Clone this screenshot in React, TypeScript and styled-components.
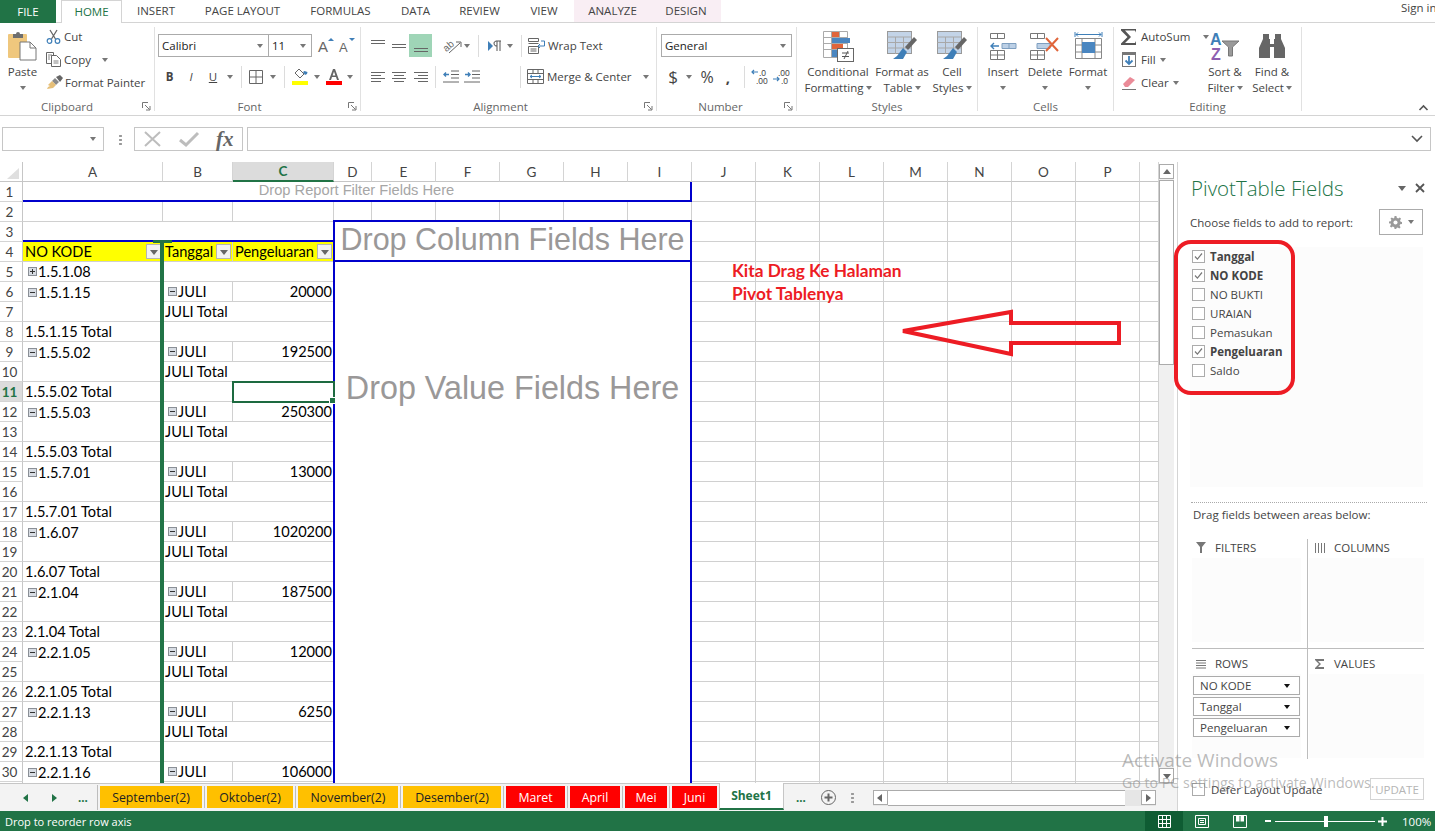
import React from "react";
import styled, { createGlobalStyle } from "styled-components";

const GREEN = "#217346";
const UI = '"Open Sans", "Liberation Sans", sans-serif';
const CELL = 'Lato, "Liberation Sans", sans-serif';
const BLUE = "#0000cc";
const RED = "#ed1c24";

const Global = createGlobalStyle`
  html, body { margin: 0; padding: 0; background: #fff; overflow: hidden; }
  * { box-sizing: border-box; }
  svg { display: block; flex: none; overflow: visible; }
`;

const Page = styled.div`
  position: relative;
  width: 1435px;
  height: 831px;
  overflow: hidden;
  display: flex;
  flex-direction: column;
  font-family: ${UI};
  font-size: 11.5px;
  color: #444;
`;

/* top tabs */
const TabRow = styled.div`
  height: 23px;
  display: flex;
  border-bottom: 1px solid #d4d4d4;
  flex: none;
`;
const FileTab = styled.div`
  width: 56px;
  height: 23px;
  margin-right: 5px;
  padding-bottom: 1px;
  background: ${GREEN};
  color: #fff;
  display: flex;
  align-items: center;
  justify-content: center;
`;
const RibbonTab = styled.div<{ $w: number; $active?: boolean; $tool?: boolean }>`
  width: ${(p) => p.$w}px;
  height: ${(p) => (p.$active ? 23 : 22)}px;
  padding-bottom: 1px;
  display: flex;
  align-items: center;
  justify-content: center;
  white-space: nowrap;
  background: ${(p) => (p.$tool ? "#f9eef4" : "#fff")};
  color: ${(p) => (p.$active ? GREEN : "#444")};
  ${(p) => p.$active && "border: 1px solid #d4d4d4; border-bottom: none; position: relative; z-index: 1;"}
`;
const SignIn = styled.div`
  margin-left: auto;
  width: 34px;
  height: 16px;
  white-space: nowrap;
`;

/* ribbon */
const Ribbon = styled.div`
  height: 93px;
  flex: none;
  display: flex;
  position: relative;
  border-bottom: 1px solid #d4d4d4;
`;
const Group = styled.div<{ $w: number; $pad: number }>`
  position: relative;
  width: ${(p) => p.$w}px;
  padding: 5px 0 0 ${(p) => p.$pad}px;
  display: flex;
  flex-direction: column;
  flex: none;
`;
const GroupBody = styled.div`
  height: 71px;
  display: flex;
`;
const GroupLabel = styled.div<{ $shift: number }>`
  position: absolute;
  left: 0;
  right: 0;
  top: 76px;
  height: 16px;
  line-height: 16px;
  text-align: center;
  color: #666;
  padding-right: ${(p) => p.$shift}px;
`;
const Launcher = styled.div`
  position: absolute;
  right: 3px;
  top: 79px;
`;
const GroupSep = styled.div`
  width: 1px;
  margin: 4px 0;
  background: #e1e1e1;
  flex: none;
`;
const Stack = styled.div<{ $w?: number; $ml?: number }>`
  display: flex;
  flex-direction: column;
  margin: -3px 0 0 ${(p) => p.$ml ?? 0}px;
  ${(p) => p.$w && `width: ${p.$w}px;`}
`;
const ToolRow = styled.div<{ $mt: number }>`
  display: flex;
  align-items: center;
  height: 23px;
  margin-top: ${(p) => p.$mt}px;
`;
const Slot = styled.div<{ $w: number; $on?: boolean; $bold?: boolean; $size?: number }>`
  width: ${(p) => p.$w}px;
  height: 23px;
  display: flex;
  align-items: center;
  justify-content: center;
  flex: none;
  background: ${(p) => (p.$on ? "#9fd5b7" : "transparent")};
  font-weight: ${(p) => (p.$bold ? 700 : 400)};
  ${(p) => p.$size && `font-size: ${p.$size}px;`}
`;
const Vsep = styled.div`
  width: 1px;
  height: 22px;
  background: #dcdcdc;
`;
const SmallBtn = styled.div<{ $gap?: number }>`
  display: flex;
  align-items: center;
  gap: ${(p) => p.$gap ?? 3}px;
  height: 23px;
  white-space: nowrap;
`;
const Combo = styled.div<{ $w: number }>`
  width: ${(p) => p.$w}px;
  height: 23px;
  border: 1px solid #ababab;
  margin-left: -1px;
  display: flex;
  align-items: center;
  justify-content: space-between;
  padding: 0 5px 0 3px;
  color: #222;
  background: #fff;
`;
const BigBtn = styled.div<{ $w: number }>`
  width: ${(p) => p.$w}px;
  display: flex;
  flex-direction: column;
  align-items: center;
  flex: none;
`;
const BigIcon = styled.div`
  height: 36px;
  display: flex;
  align-items: center;
  justify-content: center;
`;
const BigText = styled.div`
  line-height: 16px;
  height: 16px;
  display: flex;
  align-items: center;
  gap: 2px;
  white-space: nowrap;
`;
const Caret = styled.span<{ $dark?: boolean }>`
  display: inline-block;
  width: 0;
  height: 0;
  border-left: 3.5px solid transparent;
  border-right: 3.5px solid transparent;
  border-top: 4px solid ${(p) => (p.$dark ? "#111" : "#777")};
  flex: none;
`;
const Collapse = styled.div`
  position: absolute;
  right: 7px;
  top: 82px;
`;

/* formula bar */
const FormulaBar = styled.div`
  height: 46px;
  flex: none;
  padding: 11px 4px 11px 2px;
  display: flex;
  align-items: stretch;
`;
const FxBox = styled.div<{ $w?: number; $ml?: number; $pl?: number }>`
  ${(p) => (p.$w ? `width: ${p.$w}px;` : "flex: 1;")}
  margin-left: ${(p) => p.$ml ?? 0}px;
  border: 1px solid #c6c6c6;
  background: #fff;
  display: flex;
  align-items: center;
  justify-content: space-between;
  padding: 0 7px 0 ${(p) => p.$pl ?? 7}px;
`;
const GripDots = styled.div`
  width: 3px;
  height: 11px;
  margin: auto 0 auto 15px;
  background: radial-gradient(circle, #999 1.1px, transparent 1.3px) 0 0 / 3px 4px;
`;
const FxTools = styled.div`
  display: flex;
  align-items: center;
  gap: 17px;
`;
const FxMark = styled.span`
  font-family: "Liberation Serif", serif;
  font-style: italic;
  font-weight: 700;
  font-size: 21px;
  color: #666;
  line-height: 1;
`;

/* main area */
const Main = styled.div`
  flex: 1;
  display: flex;
  min-height: 0;
`;
const LeftCol = styled.div`
  width: 1177px;
  display: flex;
  flex-direction: column;
  flex: none;
`;
const SheetRow = styled.div`
  height: 621px;
  display: flex;
  flex: none;
`;
const SheetGrid = styled.div`
  position: relative;
  width: 1159px;
  height: 621px;
  overflow: hidden;
  display: grid;
  grid-template-columns: 23px 140px 70px 101px 38px repeat(12, 64px) 19px;
  grid-template-rows: 20px repeat(31, 20px);
  font-family: ${CELL};
  font-size: 14.6px;
  color: #000;
  flex: none;
`;
const Corner = styled.div`
  border-right: 1px solid #c6c6c6;
  border-bottom: 1px solid #c6c6c6;
  padding: 6px 0 0 7px;
`;
const ColHead = styled.div<{ $on?: boolean }>`
  border-right: 1px solid #d4d4d4;
  border-bottom: ${(p) => (p.$on ? `2px solid ${GREEN}` : "1px solid #c6c6c6")};
  background: ${(p) => (p.$on ? "#dcdcdc" : "#fff")};
  color: ${(p) => (p.$on ? GREEN : "#444")};
  font-weight: ${(p) => (p.$on ? 700 : 400)};
  font-size: 13.5px;
  display: flex;
  align-items: center;
  justify-content: center;
`;
const RowHead = styled.div<{ $on?: boolean }>`
  border-right: 1px solid #c6c6c6;
  border-bottom: 1px solid #d4d4d4;
  background: ${(p) => (p.$on ? "#dcdcdc" : "#fff")};
  color: ${(p) => (p.$on ? GREEN : "#444")};
  font-weight: ${(p) => (p.$on ? 700 : 400)};
  font-size: 13.5px;
  display: flex;
  align-items: center;
  justify-content: center;
  padding-right: 3px;
`;
const Cell = styled.div<{ $span?: number; $noBottom?: boolean; $right?: boolean }>`
  grid-column: span ${(p) => p.$span ?? 1};
  border-right: 1px solid #d0d0d0;
  border-bottom: ${(p) => (p.$noBottom ? "none" : "1px solid #d0d0d0")};
  display: flex;
  align-items: center;
  justify-content: ${(p) => (p.$right ? "flex-end" : "flex-start")};
  padding: 0 ${(p) => (p.$right ? 1 : 2)}px 0 2px;
  white-space: nowrap;
  overflow: hidden;
  min-width: 0;
`;
const MergedTop = styled.div`
  grid-column: span 3;
  border-bottom: 2px solid ${BLUE};
`;
const HeadCell = styled(Cell)`
  background: #ffff00;
  justify-content: space-between;
  padding-right: 1px;
`;
const FilterBtn = styled.span`
  width: 15px;
  height: 15px;
  background: #f2f2f2;
  border: 1px solid #b5b5b5;
  display: flex;
  align-items: center;
  justify-content: center;
  flex: none;
`;
const Toggle = styled.span<{ $open?: boolean }>`
  position: relative;
  width: 9px;
  height: 9px;
  margin: 0 1px 0 3px;
  background: #d7dce3;
  border: 1px solid #8a8f96;
  flex: none;
  &::before {
    content: "";
    position: absolute;
    left: 1px;
    right: 1px;
    top: 3px;
    height: 1px;
    background: #333;
  }
  ${(p) =>
    !p.$open &&
    `&::after { content: ""; position: absolute; top: 1px; bottom: 1px; left: 3px; width: 1px; background: #333; }`}
`;
const Selected = styled(Cell)`
  position: relative;
  overflow: visible;
  outline: 2px solid #1d6a40;
  outline-offset: -1px;
  z-index: 2;
  &::after {
    content: "";
    position: absolute;
    right: -3px;
    bottom: -3px;
    width: 5px;
    height: 5px;
    background: ${GREEN};
    border: 1px solid #fff;
  }
`;
const DropZone = styled.div`
  font-family: "Liberation Sans", Arial, sans-serif;
  color: #9a9898;
  white-space: nowrap;
  display: flex;
  justify-content: center;
`;
const FilterZone = styled(DropZone)`
  grid-column: span 9;
  font-size: 14.67px;
  color: #a6a6a6;
  align-items: center;
  line-height: 1;
  padding-bottom: 2px;
  border-right: 2px solid ${BLUE};
  border-bottom: 2px solid ${BLUE};
`;
const ColumnZone = styled(DropZone)`
  grid-column: span 6;
  grid-row: span 2;
  margin: -2px 0 0 -1px;
  border: 2px solid ${BLUE};
  font-size: 30.5px;
  align-items: center;
  padding-bottom: 4px;
  z-index: 1;
`;
const ValueZone = styled(DropZone)`
  grid-column: span 6;
  grid-row: span 27;
  margin-left: -1px;
  border-left: 2px solid ${BLUE};
  border-right: 2px solid ${BLUE};
  font-size: 32.3px;
  align-items: flex-start;
  padding-top: 108px;
  background: #fff;
  z-index: 1;
`;
const DragLine = styled.div`
  position: absolute;
  left: 160px;
  top: 78px;
  bottom: 0;
  width: 4px;
  background: ${GREEN};
  z-index: 3;
  &::before {
    content: "";
    position: absolute;
    left: -7px;
    top: 0;
    width: 19px;
    height: 3px;
    background: ${GREEN};
  }
`;

/* vertical scrollbar */
const VScroll = styled.div`
  width: 15px;
  margin-top: 2px;
  height: 619px;
  background: #f0f0f0;
  display: flex;
  flex-direction: column;
`;
const ScrollBtn = styled.div`
  width: 15px;
  height: 15px;
  background: #fff;
  border: 1px solid #ababab;
  display: flex;
  align-items: center;
  justify-content: center;
  flex: none;
`;
const VThumb = styled.div`
  height: 185px;
  background: #fff;
  border: 1px solid #ababab;
  flex: none;
  margin-top: 1px;
`;
const VTrack = styled.div`
  flex: 1;
`;

/* sheet tabs */
const TabBar = styled.div`
  height: 28px;
  flex: none;
  background: #f3f3f3;
  border-top: 1px solid #c6c6c6;
  display: flex;
  align-items: flex-start;
`;
const TabNav = styled.div`
  width: 98px;
  height: 25px;
  margin-top: 1px;
  display: flex;
  align-items: center;
  color: ${GREEN};
  border-right: 1px solid #bdbdbd;
  padding-left: 22px;
  gap: 20px;
  font-weight: 700;
  flex: none;
`;
const SheetTab = styled.div<{ $w: number; $bg: string; $light?: boolean }>`
  width: ${(p) => p.$w}px;
  height: 22px;
  margin: 2px 3px 0 2px;
  background: ${(p) => p.$bg};
  color: ${(p) => (p.$light ? "#fff" : "#222")};
  font-size: 12.3px;
  display: flex;
  align-items: center;
  justify-content: center;
  flex: none;
  white-space: nowrap;
  position: relative;
  &::after {
    content: "";
    position: absolute;
    right: -3px;
    top: 0;
    bottom: 0;
    width: 1px;
    background: #bdbdbd;
  }
`;
const ActiveTab = styled.div`
  width: 65px;
  height: 27px;
  margin-top: -1px;
  margin-left: -1px;
  background: #fff;
  border-bottom: 2px solid ${GREEN};
  border-left: 1px solid #c6c6c6;
  border-right: 1px solid #c6c6c6;
  color: ${GREEN};
  font-size: 12px;
  font-weight: 700;
  display: flex;
  align-items: center;
  justify-content: center;
  flex: none;
`;
const TabExtras = styled.div`
  display: flex;
  align-items: center;
  height: 25px;
  margin: 1px 0 0 12px;
  color: ${GREEN};
  font-weight: 700;
`;
const AddSheet = styled.div`
  width: 15px;
  height: 15px;
  margin-left: 15px;
  display: flex;
`;
const HScroll = styled.div`
  width: 283px;
  height: 16px;
  margin: 6px 0 0 19px;
  display: flex;
  background: #e6e6e6;
`;
const HThumb = styled.div`
  width: 237px;
  background: #fff;
  border-top: 1px solid #ababab;
  border-bottom: 1px solid #ababab;
`;
const HTrack = styled.div`
  flex: 1;
`;

/* field panel */
const Panel = styled.aside`
  position: relative;
  flex: 1;
  border-left: 1px solid #d4d4d4;
  padding: 12px 0 0 12px;
  display: flex;
  flex-direction: column;
  min-width: 0;
`;
const PanelTitle = styled.div`
  height: 28px;
  display: flex;
  align-items: center;
  justify-content: space-between;
  padding: 0 10px 0 1px;
  font-size: 20.5px;
  color: ${GREEN};
  font-weight: 300;
`;
const PanelTools = styled.div`
  display: flex;
  align-items: center;
  gap: 9px;
`;
const ChooseRow = styled.div`
  height: 26px;
  margin: 7px 12px 0 0;
  display: flex;
  align-items: center;
  justify-content: space-between;
`;
const GearBtn = styled.div`
  width: 44px;
  height: 26px;
  border: 1px solid #ababab;
  display: flex;
  align-items: center;
  justify-content: center;
  gap: 6px;
`;
const FieldList = styled.div`
  height: 240px;
  margin: 12px 12px 0 0;
  background: #fcfcfc;
`;
const FieldRow = styled.div<{ $on?: boolean }>`
  height: 19px;
  padding-left: 2px;
  display: flex;
  align-items: center;
  gap: 5px;
  font-weight: ${(p) => (p.$on ? 700 : 400)};
  color: #444;
`;
const CheckBox = styled.span`
  width: 13px;
  height: 13px;
  border: 1px solid #ababab;
  background: #fff;
  display: flex;
  align-items: center;
  justify-content: center;
  flex: none;
`;
const RedRing = styled.div`
  position: absolute;
  left: -4px;
  top: 78px;
  width: 121px;
  height: 155px;
  border: 4px solid ${RED};
  border-radius: 17px;
  pointer-events: none;
`;
const DotLine = styled.div`
  margin: 15px 8px 0 1px;
  border-top: 1px dotted #aaa;
`;
const DragText = styled.div`
  height: 16px;
  margin: 4px 0 0 3px;
  line-height: 16px;
`;
const Areas = styled.div`
  margin: 16px 0 0 2px;
  width: 232px;
  display: grid;
  grid-template-columns: 116px 116px;
  grid-template-rows: 110px 110px;
`;
const Area = styled.div<{ $left?: boolean; $top?: boolean }>`
  padding: ${(p) => (p.$top ? "0" : "6px")} 0 0 0;
  ${(p) => p.$left && "border-right: 1px solid #bdbdbd;"}
  ${(p) => p.$top && "border-bottom: 1px solid #bdbdbd;"}
`;
const AreaHead = styled.div<{ $left?: boolean }>`
  height: 17px;
  padding-left: ${(p) => (p.$left ? 4 : 7)}px;
  display: flex;
  align-items: center;
  gap: 9px;
  line-height: 1;
`;
const Well = styled.div<{ $h: number; $left?: boolean }>`
  height: ${(p) => p.$h}px;
  margin: 2px ${(p) => (p.$left ? 6 : 0)}px 0 ${(p) => (p.$left ? 0 : 1)}px;
  padding-top: 2px;
  background: #fcfcfc;
  display: flex;
  flex-direction: column;
  gap: 2px;
`;
const Pill = styled.div`
  width: 107px;
  height: 19px;
  margin-left: 1px;
  border: 1px solid #ababab;
  background: #fff;
  padding: 0 9px 0 6px;
  display: flex;
  align-items: center;
  justify-content: space-between;
`;
const PanelFoot = styled.div`
  margin: 19px 11px 0 2px;
  height: 22px;
  display: flex;
  align-items: center;
  gap: 6px;
`;
const UpdateBtn = styled.div`
  margin-left: auto;
  width: 54px;
  height: 22px;
  border: 1px solid #d4d4d4;
  color: #b5b5b5;
  display: flex;
  align-items: center;
  justify-content: center;
`;

/* status */
const StatusBar = styled.div`
  height: 20px;
  flex: none;
  background: ${GREEN};
  color: #fff;
  font-size: 11px;
  display: flex;
  align-items: center;
  padding-left: 5px;
`;
const StatusRight = styled.div`
  margin-left: auto;
  display: flex;
  align-items: center;
  height: 20px;
`;
const ViewBtn = styled.div<{ $on?: boolean }>`
  width: 38px;
  height: 20px;
  background: ${(p) => (p.$on ? "#0f5c33" : "transparent")};
  display: flex;
  align-items: center;
  justify-content: center;
`;
const ZoomMinus = styled.div`
  width: 6px;
  height: 2px;
  margin: 0 1px 0 6px;
  background: #fff;
`;
const ZoomLine = styled.div`
  position: relative;
  width: 100px;
  height: 1px;
  background: #fff;
  margin: 0 3px;
  &::after {
    content: "";
    position: absolute;
    left: 49px;
    top: -5px;
    width: 4px;
    height: 11px;
    background: #fff;
  }
`;
const ZoomValue = styled.div`
  width: 33px;
  margin-left: 15px;
  font-size: 11.5px;
  white-space: nowrap;
`;

/* overlays */
const Note = styled.div`
  position: absolute;
  left: 732px;
  top: 259px;
  font-family: ${CELL};
  font-weight: 700;
  font-size: 17.3px;
  line-height: 23px;
  color: ${RED};
  white-space: nowrap;
`;
const ArrowShape = styled.svg`
  position: absolute;
  left: 898px;
  top: 306px;
`;
const Watermark = styled.div`
  position: absolute;
  left: 1122px;
  top: 748px;
  color: rgba(130, 130, 130, 0.55);
  white-space: nowrap;
  pointer-events: none;
  z-index: 5;
`;
const WaterBig = styled.div`
  font-size: 19px;
  line-height: 24px;
`;
const WaterSmall = styled.div`
  font-size: 14.2px;
  line-height: 22px;
`;

/* drawings */
const Lines = ({ ys, xs }: { ys: number[]; xs: [number, number][] }) => (
  <svg width="16" height="16" viewBox="0 0 16 16" stroke="#666" strokeWidth="1">
    {ys.map((y, i) => (
      <line key={i} x1={xs[i][0]} x2={xs[i][1]} y1={y + 0.5} y2={y + 0.5} />
    ))}
  </svg>
);
const full: [number, number][] = [[1, 15], [1, 15]];
const Launch = () => (
  <svg width="9" height="9" viewBox="0 0 9 9" fill="none" stroke="#777">
    <path d="M.5 6V.5H6M3 3l4.5 4.5M8 4v4H4" />
  </svg>
);
const Check = () => (
  <svg width="11" height="11" viewBox="0 0 11 11" fill="none" stroke="#777" strokeWidth="1.2">
    <path d="M2 5.5l2.4 2.6L9 2.5" />
  </svg>
);
const PasteIcon = () => (
  <svg width="29" height="30" viewBox="0 0 29 30">
    <rect x="0" y="3" width="19" height="24" rx="1" fill="#efc77d" />
    <path d="M5 3h3a2 2 0 0 1 4 0h3v4H5z" fill="#6e6e6e" />
    <path d="M12 11h10l6 6v12H12z" fill="#fff" stroke="#777" />
    <path d="M22 11v6h6" fill="none" stroke="#777" />
  </svg>
);
const CutIcon = () => (
  <svg width="15" height="15" viewBox="0 0 15 15" fill="none">
    <path d="M4 1l5.5 9M11 1L5.5 10" stroke="#666" strokeWidth="1.3" />
    <circle cx="3.5" cy="12" r="2.3" stroke="#3f7fb8" strokeWidth="1.2" />
    <circle cx="11.5" cy="12" r="2.3" stroke="#3f7fb8" strokeWidth="1.2" />
  </svg>
);
const CopyIcon = () => (
  <svg width="15" height="15" viewBox="0 0 15 15" fill="#fff" stroke="#666">
    <path d="M.5.5h7v11h-7z" />
    <path d="M5.5 3.5h5l4 4v7h-9z" />
    <path d="M2 3h4M2 5h2M2 7h2M7.5 9h5M7.5 11h5" strokeWidth=".8" />
  </svg>
);
const BrushIcon = () => (
  <svg width="17" height="15" viewBox="0 0 17 15">
    <path d="M10 2l4-2 3 3-3 4z" fill="#666" />
    <path d="M9 3l4 4-3 3-4-4z" fill="#8a8a8a" />
    <path d="M6 6l4 4-3 3-6 1 1-2 2-1-2-1z" fill="#e6bf78" />
  </svg>
);
const FillIcon = () => (
  <svg width="17" height="17" viewBox="0 0 17 17">
    <path d="M7 1l5 5-4 4-5-5z" fill="#fff" stroke="#666" />
    <path d="M11 4l2 3 2-1 .5-2-3-1z" fill="#3f7fb8" />
    <rect x="0" y="13" width="16" height="4" fill="#ffff00" />
  </svg>
);
const ColorA = () => (
  <svg width="16" height="17" viewBox="0 0 16 17">
    <path d="M3 12L7 1h2l4 11h-2L10 9H6l-1 3zM6.6 7.5h2.8L8 3.5z" fill="#666" />
    <rect x="0" y="13" width="16" height="4" fill="#ff0000" />
  </svg>
);
const GrowA = ({ up }: { up: boolean }) => (
  <svg width="16" height="17" viewBox="0 0 16 17">
    <text x="0" y="15" fontFamily="Liberation Sans, sans-serif" fontSize={up ? 15 : 13} fill="#666">
      A
    </text>
    <path d={up ? "M10 4l3-3 3 3z" : "M10 1h6l-3 3z"} fill="#3f7fb8" />
  </svg>
);
const Orient = () => (
  <svg width="19" height="18" viewBox="0 0 19 18" fill="none">
    <text x="0" y="12" transform="rotate(-40 6 9)" fontFamily="Liberation Sans, sans-serif" fontSize="10" fill="#666">
      ab
    </text>
    <path d="M6 16L17 6M13 5h5v5" stroke="#666" />
  </svg>
);
const Para = () => (
  <svg width="13" height="12" viewBox="0 0 13 12">
    <path d="M0 1l5 5-5 5z" fill="#3f7fb8" />
    <path d="M8 1h5M9 1v10M12 1v10M8 1a2.5 2.5 0 0 0 1 5" stroke="#555" fill="none" />
  </svg>
);
const WrapIcon = () => (
  <svg width="17" height="16" viewBox="0 0 17 16" fill="none" stroke="#666">
    <path d="M.5.5h10v3H.5zM.5 5.5h10M.5 8.5h10v7H.5zM2.5 11h6M2.5 13h6" />
    <path d="M13 3h3.5v5H10" stroke="#3f7fb8" />
    <path d="M12 6l-2 2 2 2" stroke="#3f7fb8" />
  </svg>
);
const MergeIcon = () => (
  <svg width="17" height="15" viewBox="0 0 17 15" fill="none" stroke="#666">
    <path d="M.5.5h16v14H.5zM.5 4.5h16M.5 10.5h16M6 .5v4M11 .5v4M6 10.5v4M11 10.5v4" />
    <path d="M3 7.5h11M5 6L3 7.5 5 9M12 6l2 1.5L12 9" stroke="#3f7fb8" />
  </svg>
);
const Indent = ({ dir }: { dir: "in" | "out" }) => (
  <svg width="16" height="13" viewBox="0 0 16 13" fill="none">
    <path d="M8 1h8M8 4.5h8M8 8h8M0 12h16" stroke="#666" />
    <path d={dir === "out" ? "M6 4.5H1M3 2.5l-2 2 2 2" : "M1 4.5h5M4 2.5l2 2-2 2"} stroke="#3f7fb8" strokeWidth="1.4" />
  </svg>
);
const BordersIcon = () => (
  <svg width="14" height="14" viewBox="0 0 14 14" fill="none" stroke="#666">
    <path d="M.5.5h13v13H.5zM7 .5v13M.5 7h13" />
  </svg>
);
const DecIcon = ({ more }: { more: boolean }) => (
  <svg width="18" height="17" viewBox="0 0 18 17" fontFamily="Liberation Sans, sans-serif" fontSize="8.5" fill="#444">
    <text x={more ? 5 : 8} y="8">{more ? ".00" : ".0"}</text>
    <text x={more ? 8 : 5} y="16">{more ? ".0" : ".00"}</text>
    <path d={more ? "M0 11h6M4 9l2 2-2 2" : "M7 4H1M3 2L1 4l2 2"} stroke="#3f7fb8" strokeWidth="1.2" fill="none" />
  </svg>
);
const CondIcon = () => (
  <svg width="31" height="31" viewBox="0 0 31 31">
    <path d="M.5.5h24v26H.5zM.5 6.5h24M.5 12.5h24M.5 18.5h24M8.5.5v26M16.5.5v26" fill="#fff" stroke="#aaa" />
    <rect x="9" y="1" width="7" height="5" fill="#e0653a" />
    <rect x="9" y="7" width="18" height="5" fill="#4a86c0" />
    <rect x="9" y="13" width="11" height="5" fill="#e0653a" />
    <rect x="9" y="19" width="5" height="7" fill="#4a86c0" />
    <rect x="14.5" y="17.5" width="16" height="13" fill="#fff" stroke="#666" />
    <path d="M19 22h7M19 25.5h7M25 20l-4 8" stroke="#555" fill="none" />
  </svg>
);
const TableBrush = () => (
  <svg width="30" height="30" viewBox="0 0 30 30">
    <rect x=".5" y=".5" width="24" height="22" fill="#c3d4e8" stroke="#999" />
    <path d="M.5 6h24M.5 11.5h24M.5 17h24M8.5 6v17M16.5 6v17" stroke="#a8a8a8" fill="none" />
    <path d="M30 9l-9 10-3-3 9-10z" fill="#666" />
    <path d="M16 17l4 4-4 7H6l4-3z" fill="#3f7fb8" />
  </svg>
);
const InsertIcon = () => (
  <svg width="27" height="27" viewBox="0 0 27 27" fill="none" stroke="#777">
    <path d="M.5.5h14v5H.5zM7.5.5v5M.5 17.5h14v9H.5zM7.5 17.5v9M.5 22h14" />
    <path d="M12 10.5h14v5H12zM19 10.5v5" fill="#bcd0e6" stroke="#7f9fc0" />
    <path d="M9 13H1M4 10l-3 3 3 3" stroke="#3f7fb8" strokeWidth="1.4" />
  </svg>
);
const DeleteIcon = () => (
  <svg width="30" height="27" viewBox="0 0 30 27" fill="none" stroke="#777">
    <path d="M.5.5h14v5H.5zM7.5.5v5M.5 17.5h14v9H.5zM7.5 17.5v9M.5 22h14" />
    <path d="M7 10.5h13v5H7z" fill="#bcd0e6" stroke="#7f9fc0" />
    <path d="M16 5l12 13M28 5L16 18" stroke="#e0653a" strokeWidth="2" />
  </svg>
);
const FormatIcon = () => (
  <svg width="29" height="30" viewBox="0 0 29 30" fill="none" stroke="#888">
    <path d="M1 1v5M28 1v5M2 3.5h25M2 3.5l2-2M2 3.5l2 2M27 3.5l-2-2M27 3.5l-2 2" stroke="#3f7fb8" />
    <path d="M1.5 7.5h26v20h-26zM1.5 14h26M1.5 21h26M8 7.5v20M21 7.5v20" fill="#fff" />
    <rect x="8" y="11" width="13" height="11" fill="#4a86c0" stroke="none" />
  </svg>
);
const SumIcon = () => (
  <svg width="16" height="16" viewBox="0 0 16 16">
    <path d="M0 0h15v3.5l-1-2H4l6 6.5-6 6h10l1-2V16H0v-1.5L6.5 8 0 1.5z" fill="#555" />
  </svg>
);
const FillDown = () => (
  <svg width="14" height="15" viewBox="0 0 14 15">
    <rect x=".5" y=".5" width="13" height="14" fill="#fff" stroke="#777" />
    <rect x="0" y="0" width="14" height="3" fill="#777" />
    <path d="M7 4v8M3.5 8.5L7 12l3.5-3.5" stroke="#3f7fb8" strokeWidth="1.8" fill="none" />
  </svg>
);
const ClearIcon = () => (
  <svg width="15" height="14" viewBox="0 0 15 14">
    <path d="M1 8l7-7 5 3-7 7H3z" fill="#ea8b98" />
    <path d="M0 13.5h14" stroke="#777" />
  </svg>
);
const SortIcon = () => (
  <svg width="30" height="28" viewBox="0 0 30 28" fontFamily="Liberation Sans, sans-serif" fontWeight="700" fontSize="16">
    <text x="0" y="13" fill="#3f7fb8">A</text>
    <text x="1" y="28" fill="#8e5fb0">Z</text>
    <path d="M12 9h17l-6.5 6v9h-4v-9z" fill="#9a9a9a" stroke="#777" />
  </svg>
);
const FindIcon = () => (
  <svg width="26" height="24" viewBox="0 0 26 24" fill="#666">
    <path d="M4 0h6v5h1v5h4V5h1V0h6v5l4 9v10H15V13h-4v11H0V14l4-9z" />
  </svg>
);
const GearIcon = () => (
  <svg width="13" height="13" viewBox="0 0 14 14" fill="#9a9a9a">
    <path d="M6 0h2l.4 2 1.5.6L11.6 1.5 13 3l-1.1 1.7.6 1.5 1.5.3v2l-2 .4-.6 1.5 1.1 1.7-1.4 1.4-1.7-1.1-1.5.6L8 14H6l-.4-2-1.5-.6-1.7 1.1L1 11l1.1-1.7-.6-1.5L0 8V6l2-.4.6-1.5L1.5 3 3 1.5l1.7 1.1 1-.6z" />
    <circle cx="7" cy="7" r="2.2" fill="#fff" />
  </svg>
);
const Tri = ({ dir, color = "#666" }: { dir: "up" | "down" | "left" | "right"; color?: string }) => {
  const d = { up: "M0 6L4 1l4 5z", down: "M0 2h8L4 7z", left: "M6 0v8L1 4z", right: "M2 0v8l5-4z" }[dir];
  return (
    <svg width="8" height="8" viewBox="0 0 8 8">
      <path d={d} fill={color} />
    </svg>
  );
};
const SumSmall = () => (
  <svg width="10" height="10" viewBox="0 0 10 10">
    <path d="M0 0h9v2H3l3 3-3 3h6v2H0V9l4-4-4-4z" fill="#777" />
  </svg>
);

const WHITE = "#fff";
const GridView = () => (
  <svg width="13" height="13" viewBox="0 0 13 13" fill="none" stroke={WHITE}>
    <path d="M.5.5h12v12H.5zM4.5.5v12M8.5.5v12M.5 4.5h12M.5 8.5h12" />
  </svg>
);
const PageView = () => (
  <svg width="14" height="13" viewBox="0 0 14 13" fill="none" stroke={WHITE}>
    <path d="M.5.5h13v12H.5zM3.5 3.5h7v6h-7zM5 5.5h4M5 7.5h4" />
  </svg>
);
const BreakView = () => (
  <svg width="14" height="13" viewBox="0 0 14 13" stroke={WHITE} fill="none">
    <path d="M.5.5h13v12H.5z" />
    <path d="M3 .5h3.5v6H3zM7.5.5H11v6H7.5z" fill={WHITE} stroke="none" />
  </svg>
);

/* data */
const colNames = ["A", "B", "C", "D", "E", "F", "G", "H", "I", "J", "K", "L", "M", "N", "O", "P", ""];
const codes: [string, string][] = [
  ["1.5.1.15", "20000"],
  ["1.5.5.02", "192500"],
  ["1.5.5.03", "250300"],
  ["1.5.7.01", "13000"],
  ["1.6.07", "1020200"],
  ["2.1.04", "187500"],
  ["2.2.1.05", "12000"],
  ["2.2.1.13", "6250"],
  ["2.2.1.16", "106000"],
];
const fields = [
  { name: "Tanggal", on: true },
  { name: "NO KODE", on: true },
  { name: "NO BUKTI", on: false },
  { name: "URAIAN", on: false },
  { name: "Pemasukan", on: false },
  { name: "Pengeluaran", on: true },
  { name: "Saldo", on: false },
];
const orangeTabs = [
  { name: "September(2)", w: 102 },
  { name: "Oktober(2)", w: 86 },
  { name: "November(2)", w: 100 },
  { name: "Desember(2)", w: 98 },
];
const redTabs = [
  { name: "Maret", w: 59 },
  { name: "April", w: 50 },
  { name: "Mei", w: 42 },
  { name: "Juni", w: 45 },
];

const Blank = ({ n }: { n: number }) => (
  <>
    {Array.from({ length: n }, (_, i) => (
      <Cell key={i} />
    ))}
  </>
);

function pivotCells(row: number) {
  if (row === 5) {
    return (
      <>
        <Cell>
          <Toggle />
          1.5.1.08
        </Cell>
        <Cell $span={2} />
      </>
    );
  }
  if (row > 30) return <Cell $span={3} />;
  const idx = Math.floor((row - 6) / 3);
  const kind = (row - 6) % 3;
  const [code, value] = codes[idx];
  if (kind === 0) {
    return (
      <>
        <Cell $noBottom>
          <Toggle $open />
          {code}
        </Cell>
        <Cell>
          <Toggle $open />
          JULI
        </Cell>
        <Cell $right>{value}</Cell>
      </>
    );
  }
  if (kind === 1) {
    return (
      <>
        <Cell />
        <Cell $span={2}>JULI Total</Cell>
      </>
    );
  }
  return (
    <>
      <Cell>{code} Total</Cell>
      {row === 11 ? (
        <>
          <Cell />
          <Selected />
        </>
      ) : (
        <Cell $span={2} />
      )}
    </>
  );
}

function Sheet() {
  const rows = Array.from({ length: 31 }, (_, i) => i + 1);
  return (
    <SheetGrid>
      <Corner>
        <svg width="12" height="11" viewBox="0 0 12 11">
          <path d="M12 0v11H0z" fill="#dfdfdf" />
        </svg>
      </Corner>
      {colNames.map((c, i) => (
        <ColHead key={i} $on={c === "C"}>
          {c}
        </ColHead>
      ))}
      {rows.map((r) => (
        <React.Fragment key={r}>
          <RowHead $on={r === 11}>{r <= 30 ? r : ""}</RowHead>
          {r === 1 && <FilterZone>Drop Report Filter Fields Here</FilterZone>}
          {r === 2 && <Blank n={9} />}
          {r === 3 && (
            <>
              <MergedTop />
              <ColumnZone>Drop Column Fields Here</ColumnZone>
            </>
          )}
          {r === 4 && (
            <>
              <HeadCell>
                NO KODE
                <FilterBtn>
                  <Tri dir="down" />
                </FilterBtn>
              </HeadCell>
              <HeadCell>
                Tanggal
                <FilterBtn>
                  <Tri dir="down" />
                </FilterBtn>
              </HeadCell>
              <HeadCell>
                Pengeluaran
                <FilterBtn>
                  <Tri dir="down" />
                </FilterBtn>
              </HeadCell>
            </>
          )}
          {r >= 5 && pivotCells(r)}
          {r === 5 && <ValueZone>Drop Value Fields Here</ValueZone>}
          <Blank n={8} />
        </React.Fragment>
      ))}
      <DragLine />
    </SheetGrid>
  );
}

function RibbonBar() {
  return (
    <Ribbon>
      <Group $w={154} $pad={0}>
        <GroupBody>
          <BigBtn $w={45}>
            <BigIcon>
              <PasteIcon />
            </BigIcon>
            <BigText>Paste</BigText>
            <BigText>
              <Caret />
            </BigText>
          </BigBtn>
          <Stack $ml={1}>
            <SmallBtn>
              <CutIcon />
              Cut
            </SmallBtn>
            <SmallBtn>
              <CopyIcon />
              Copy
              <Slot $w={22}>
                <Caret />
              </Slot>
            </SmallBtn>
            <SmallBtn $gap={2}>
              <BrushIcon />
              Format Painter
            </SmallBtn>
          </Stack>
        </GroupBody>
        <GroupLabel $shift={20}>Clipboard</GroupLabel>
        <Launcher>
          <Launch />
        </Launcher>
      </Group>
      <GroupSep />
      <Group $w={205} $pad={4}>
        <ToolRow $mt={6}>
          <Combo $w={111}>
            Calibri
            <Caret />
          </Combo>
          <Combo $w={44}>
            11
            <Caret />
          </Combo>
          <Slot $w={3} />
          <Slot $w={21}>
            <GrowA up />
          </Slot>
          <Slot $w={21}>
            <GrowA up={false} />
          </Slot>
        </ToolRow>
        <ToolRow $mt={8}>
          <Slot $w={21} $bold>
            B
          </Slot>
          <Slot $w={22}>
            <i>I</i>
          </Slot>
          <Slot $w={22}>
            <u>U</u>
          </Slot>
          <Slot $w={12}>
            <Caret />
          </Slot>
          <Slot $w={10}>
            <Vsep />
          </Slot>
          <Slot $w={20}>
            <BordersIcon />
          </Slot>
          <Slot $w={14}>
            <Caret />
          </Slot>
          <Slot $w={8}>
            <Vsep />
          </Slot>
          <Slot $w={24}>
            <FillIcon />
          </Slot>
          <Slot $w={10}>
            <Caret />
          </Slot>
          <Slot $w={24}>
            <ColorA />
          </Slot>
          <Slot $w={8}>
            <Caret />
          </Slot>
        </ToolRow>
        <GroupLabel $shift={16}>Font</GroupLabel>
        <Launcher>
          <Launch />
        </Launcher>
      </Group>
      <GroupSep />
      <Group $w={295} $pad={6}>
        <ToolRow $mt={6}>
          <Slot $w={21}>
            <Lines ys={[2, 5]} xs={full} />
          </Slot>
          <Slot $w={21}>
            <Lines ys={[6, 9]} xs={full} />
          </Slot>
          <Slot $w={23} $on>
            <Lines ys={[10, 13]} xs={full} />
          </Slot>
          <Slot $w={10} />
          <Slot $w={20}>
            <Orient />
          </Slot>
          <Slot $w={10}>
            <Caret />
          </Slot>
          <Slot $w={12}>
            <Vsep />
          </Slot>
          <Slot $w={20}>
            <Para />
          </Slot>
          <Slot $w={12}>
            <Caret />
          </Slot>
          <Slot $w={10}>
            <Vsep />
          </Slot>
          <Slot $w={2} />
          <SmallBtn>
            <WrapIcon />
            Wrap Text
          </SmallBtn>
        </ToolRow>
        <ToolRow $mt={8}>
          <Slot $w={21}>
            <Lines ys={[3, 6, 9, 12]} xs={[[1, 15], [1, 11], [1, 15], [1, 11]]} />
          </Slot>
          <Slot $w={21}>
            <Lines ys={[3, 6, 9, 12]} xs={[[1, 15], [3, 13], [1, 15], [3, 13]]} />
          </Slot>
          <Slot $w={23}>
            <Lines ys={[3, 6, 9, 12]} xs={[[1, 15], [5, 15], [1, 15], [5, 15]]} />
          </Slot>
          <Slot $w={6}>
            <Vsep />
          </Slot>
          <Slot $w={26}>
            <Indent dir="out" />
          </Slot>
          <Slot $w={16}>
            <Indent dir="in" />
          </Slot>
          <Slot $w={35} />
          <Slot $w={10}>
            <Vsep />
          </Slot>
          <Slot $w={2} />
          <SmallBtn>
            <MergeIcon />
            Merge &amp; Center
            <Slot $w={22}>
              <Caret />
            </Slot>
          </SmallBtn>
        </ToolRow>
        <GroupLabel $shift={16}>Alignment</GroupLabel>
        <Launcher>
          <Launch />
        </Launcher>
      </Group>
      <GroupSep />
      <Group $w={139} $pad={5}>
        <ToolRow $mt={6}>
          <Combo $w={131}>
            General
            <Caret />
          </Combo>
        </ToolRow>
        <ToolRow $mt={8}>
          <Slot $w={22} $size={17}>
            $
          </Slot>
          <Slot $w={10}>
            <Caret />
          </Slot>
          <Slot $w={26} $size={16}>
            %
          </Slot>
          <Slot $w={16} $bold $size={15}>
            ,
          </Slot>
          <Slot $w={16}>
            <Vsep />
          </Slot>
          <Slot $w={15}>
            <DecIcon more={false} />
          </Slot>
          <Slot $w={7} />
          <Slot $w={16}>
            <DecIcon more />
          </Slot>
        </ToolRow>
        <GroupLabel $shift={12}>Number</GroupLabel>
        <Launcher>
          <Launch />
        </Launcher>
      </Group>
      <GroupSep />
      <Group $w={180} $pad={4}>
        <GroupBody>
          <BigBtn $w={74}>
            <BigIcon>
              <CondIcon />
            </BigIcon>
            <BigText>Conditional</BigText>
            <BigText>
              Formatting
              <Caret />
            </BigText>
          </BigBtn>
          <BigBtn $w={54}>
            <BigIcon>
              <TableBrush />
            </BigIcon>
            <BigText>Format as</BigText>
            <BigText>
              Table
              <Caret />
            </BigText>
          </BigBtn>
          <BigBtn $w={46}>
            <BigIcon>
              <TableBrush />
            </BigIcon>
            <BigText>Cell</BigText>
            <BigText>
              Styles
              <Caret />
            </BigText>
          </BigBtn>
        </GroupBody>
        <GroupLabel $shift={0}>Styles</GroupLabel>
      </Group>
      <GroupSep />
      <Group $w={135} $pad={4}>
        <GroupBody>
          <BigBtn $w={42}>
            <BigIcon>
              <InsertIcon />
            </BigIcon>
            <BigText>Insert</BigText>
            <BigText>
              <Caret />
            </BigText>
          </BigBtn>
          <BigBtn $w={42}>
            <BigIcon>
              <DeleteIcon />
            </BigIcon>
            <BigText>Delete</BigText>
            <BigText>
              <Caret />
            </BigText>
          </BigBtn>
          <BigBtn $w={44}>
            <BigIcon>
              <FormatIcon />
            </BigIcon>
            <BigText>Format</BigText>
            <BigText>
              <Caret />
            </BigText>
          </BigBtn>
        </GroupBody>
        <GroupLabel $shift={0}>Cells</GroupLabel>
      </Group>
      <GroupSep />
      <Group $w={187} $pad={7}>
        <GroupBody>
          <Stack $w={86}>
            <SmallBtn $gap={4}>
              <SumIcon />
              AutoSum
              <Slot $w={24}>
                <Caret />
              </Slot>
            </SmallBtn>
            <SmallBtn $gap={4}>
              <Slot $w={16}>
                <FillDown />
              </Slot>
              Fill
              <Caret />
            </SmallBtn>
            <SmallBtn $gap={4}>
              <Slot $w={16}>
                <ClearIcon />
              </Slot>
              Clear
              <Caret />
            </SmallBtn>
          </Stack>
          <BigBtn $w={36}>
            <BigIcon>
              <SortIcon />
            </BigIcon>
            <BigText>Sort &amp;</BigText>
            <BigText>
              Filter
              <Caret />
            </BigText>
          </BigBtn>
          <BigBtn $w={58}>
            <BigIcon>
              <FindIcon />
            </BigIcon>
            <BigText>Find &amp;</BigText>
            <BigText>
              Select
              <Caret />
            </BigText>
          </BigBtn>
        </GroupBody>
        <GroupLabel $shift={0}>Editing</GroupLabel>
      </Group>
      <GroupSep />
      <Collapse>
        <svg width="9" height="6" viewBox="0 0 9 6" fill="none" stroke="#555" strokeWidth="1.6">
          <path d="M.5 5l4-4 4 4" />
        </svg>
      </Collapse>
    </Ribbon>
  );
}

function FieldsPanel() {
  return (
    <Panel>
      <PanelTitle>
        PivotTable Fields
        <PanelTools>
          <Tri dir="down" />
          <svg width="10" height="10" viewBox="0 0 10 10" stroke="#555" strokeWidth="1.8">
            <path d="M1 1l8 8M9 1L1 9" />
          </svg>
        </PanelTools>
      </PanelTitle>
      <ChooseRow>
        Choose fields to add to report:
        <GearBtn>
          <GearIcon />
          <Caret />
        </GearBtn>
      </ChooseRow>
      <FieldList>
        {fields.map((f) => (
          <FieldRow key={f.name} $on={f.on}>
            <CheckBox>{f.on && <Check />}</CheckBox>
            {f.name}
          </FieldRow>
        ))}
      </FieldList>
      <RedRing />
      <DotLine />
      <DragText>Drag fields between areas below:</DragText>
      <Areas>
        <Area $left $top>
          <AreaHead $left>
            <svg width="10" height="11" viewBox="0 0 10 11">
              <path d="M0 0h10L6 5v6H4V5z" fill="#777" />
            </svg>
            FILTERS
          </AreaHead>
          <Well $h={84} $left />
        </Area>
        <Area $top>
          <AreaHead>
            <svg width="10" height="10" viewBox="0 0 10 10" stroke="#777">
              <path d="M.5 0v10M3.5 0v10M6.5 0v10M9.5 0v10" />
            </svg>
            COLUMNS
          </AreaHead>
          <Well $h={84} />
        </Area>
        <Area $left>
          <AreaHead $left>
            <svg width="10" height="10" viewBox="0 0 10 10" stroke="#777">
              <path d="M0 1.5h10M0 4h10M0 6.5h10M0 9h10" />
            </svg>
            ROWS
          </AreaHead>
          <Well $h={84} $left>
            {["NO KODE", "Tanggal", "Pengeluaran"].map((n) => (
              <Pill key={n}>
                {n}
                <Caret $dark />
              </Pill>
            ))}
          </Well>
        </Area>
        <Area>
          <AreaHead>
            <SumSmall />
            VALUES
          </AreaHead>
          <Well $h={84} />
        </Area>
      </Areas>
      <PanelFoot>
        <CheckBox />
        Defer Layout Update
        <UpdateBtn>UPDATE</UpdateBtn>
      </PanelFoot>
    </Panel>
  );
}

export default function App() {
  return (
    <Page>
      <Global />
      <TabRow>
        <FileTab>FILE</FileTab>
        <RibbonTab $w={61} $active>
          HOME
        </RibbonTab>
        <RibbonTab $w={68}>INSERT</RibbonTab>
        <RibbonTab $w={105}>PAGE LAYOUT</RibbonTab>
        <RibbonTab $w={91}>FORMULAS</RibbonTab>
        <RibbonTab $w={59}>DATA</RibbonTab>
        <RibbonTab $w={69}>REVIEW</RibbonTab>
        <RibbonTab $w={60}>VIEW</RibbonTab>
        <RibbonTab $w={77} $tool>
          ANALYZE
        </RibbonTab>
        <RibbonTab $w={70} $tool>
          DESIGN
        </RibbonTab>
        <SignIn>Sign in</SignIn>
      </TabRow>
      <RibbonBar />
      <FormulaBar>
        <FxBox $w={102}>
          <span />
          <Caret />
        </FxBox>
        <GripDots />
        <FxBox $w={109} $ml={12} $pl={9}>
          <FxTools>
            <svg width="18" height="16" viewBox="0 0 18 16" stroke="#bdbdbd" strokeWidth="2">
              <path d="M1 1l15 14M16 1L1 15" />
            </svg>
            <svg width="20" height="16" viewBox="0 0 20 16" fill="none" stroke="#bdbdbd" strokeWidth="3">
              <path d="M1 9l6 5L19 2" />
            </svg>
            <FxMark>fx</FxMark>
          </FxTools>
        </FxBox>
        <FxBox $ml={4}>
          <span />
          <svg width="12" height="8" viewBox="0 0 12 8" fill="none" stroke="#555" strokeWidth="1.6">
            <path d="M1 1l5 5 5-5" />
          </svg>
        </FxBox>
      </FormulaBar>
      <Main>
        <LeftCol>
          <SheetRow>
            <Sheet />
            <VScroll>
              <ScrollBtn>
                <Tri dir="up" />
              </ScrollBtn>
              <VThumb />
              <VTrack />
              <ScrollBtn>
                <Tri dir="down" />
              </ScrollBtn>
            </VScroll>
          </SheetRow>
          <TabBar>
            <TabNav>
              <Tri dir="left" color={GREEN} />
              <Tri dir="right" color={GREEN} />
              <span>...</span>
            </TabNav>
            {orangeTabs.map((t) => (
              <SheetTab key={t.name} $w={t.w} $bg="#ffc000">
                {t.name}
              </SheetTab>
            ))}
            {redTabs.map((t) => (
              <SheetTab key={t.name} $w={t.w} $bg="#ff0000" $light>
                {t.name}
              </SheetTab>
            ))}
            <ActiveTab>Sheet1</ActiveTab>
            <TabExtras>
              <span>...</span>
              <AddSheet>
                <svg width="15" height="15" viewBox="0 0 15 15" fill="none" stroke="#666">
                  <circle cx="7.5" cy="7.5" r="7" />
                  <path d="M3.5 7.5h8M7.5 3.5v8" strokeWidth="2" />
                </svg>
              </AddSheet>
              <GripDots />
            </TabExtras>
            <HScroll>
              <ScrollBtn>
                <Tri dir="left" />
              </ScrollBtn>
              <HThumb />
              <HTrack />
              <ScrollBtn>
                <Tri dir="right" />
              </ScrollBtn>
            </HScroll>
          </TabBar>
        </LeftCol>
        <FieldsPanel />
      </Main>
      <StatusBar>
        Drop to reorder row axis
        <StatusRight>
          <ViewBtn $on>
            <GridView />
          </ViewBtn>
          <ViewBtn>
            <PageView />
          </ViewBtn>
          <ViewBtn>
            <BreakView />
          </ViewBtn>
          <ZoomMinus />
          <ZoomLine />
          <svg width="9" height="9" viewBox="0 0 9 9" fill="#fff">
            <path d="M3.5 0h2v3.5H9v2H5.5V9h-2V5.5H0v-2h3.5z" />
          </svg>
          <ZoomValue>100%</ZoomValue>
        </StatusRight>
      </StatusBar>
      <Note>
        Kita Drag Ke Halaman
        <br />
        Pivot Tablenya
      </Note>
      <ArrowShape width="226" height="50" viewBox="0 0 226 50" fill="none" stroke={RED} strokeWidth="4">
        <path d="M5 25L113 6v11h108v20H113v11z" />
      </ArrowShape>
      <Watermark>
        <WaterBig>Activate Windows</WaterBig>
        <WaterSmall>Go to PC settings to activate Windows.</WaterSmall>
      </Watermark>
    </Page>
  );
}
